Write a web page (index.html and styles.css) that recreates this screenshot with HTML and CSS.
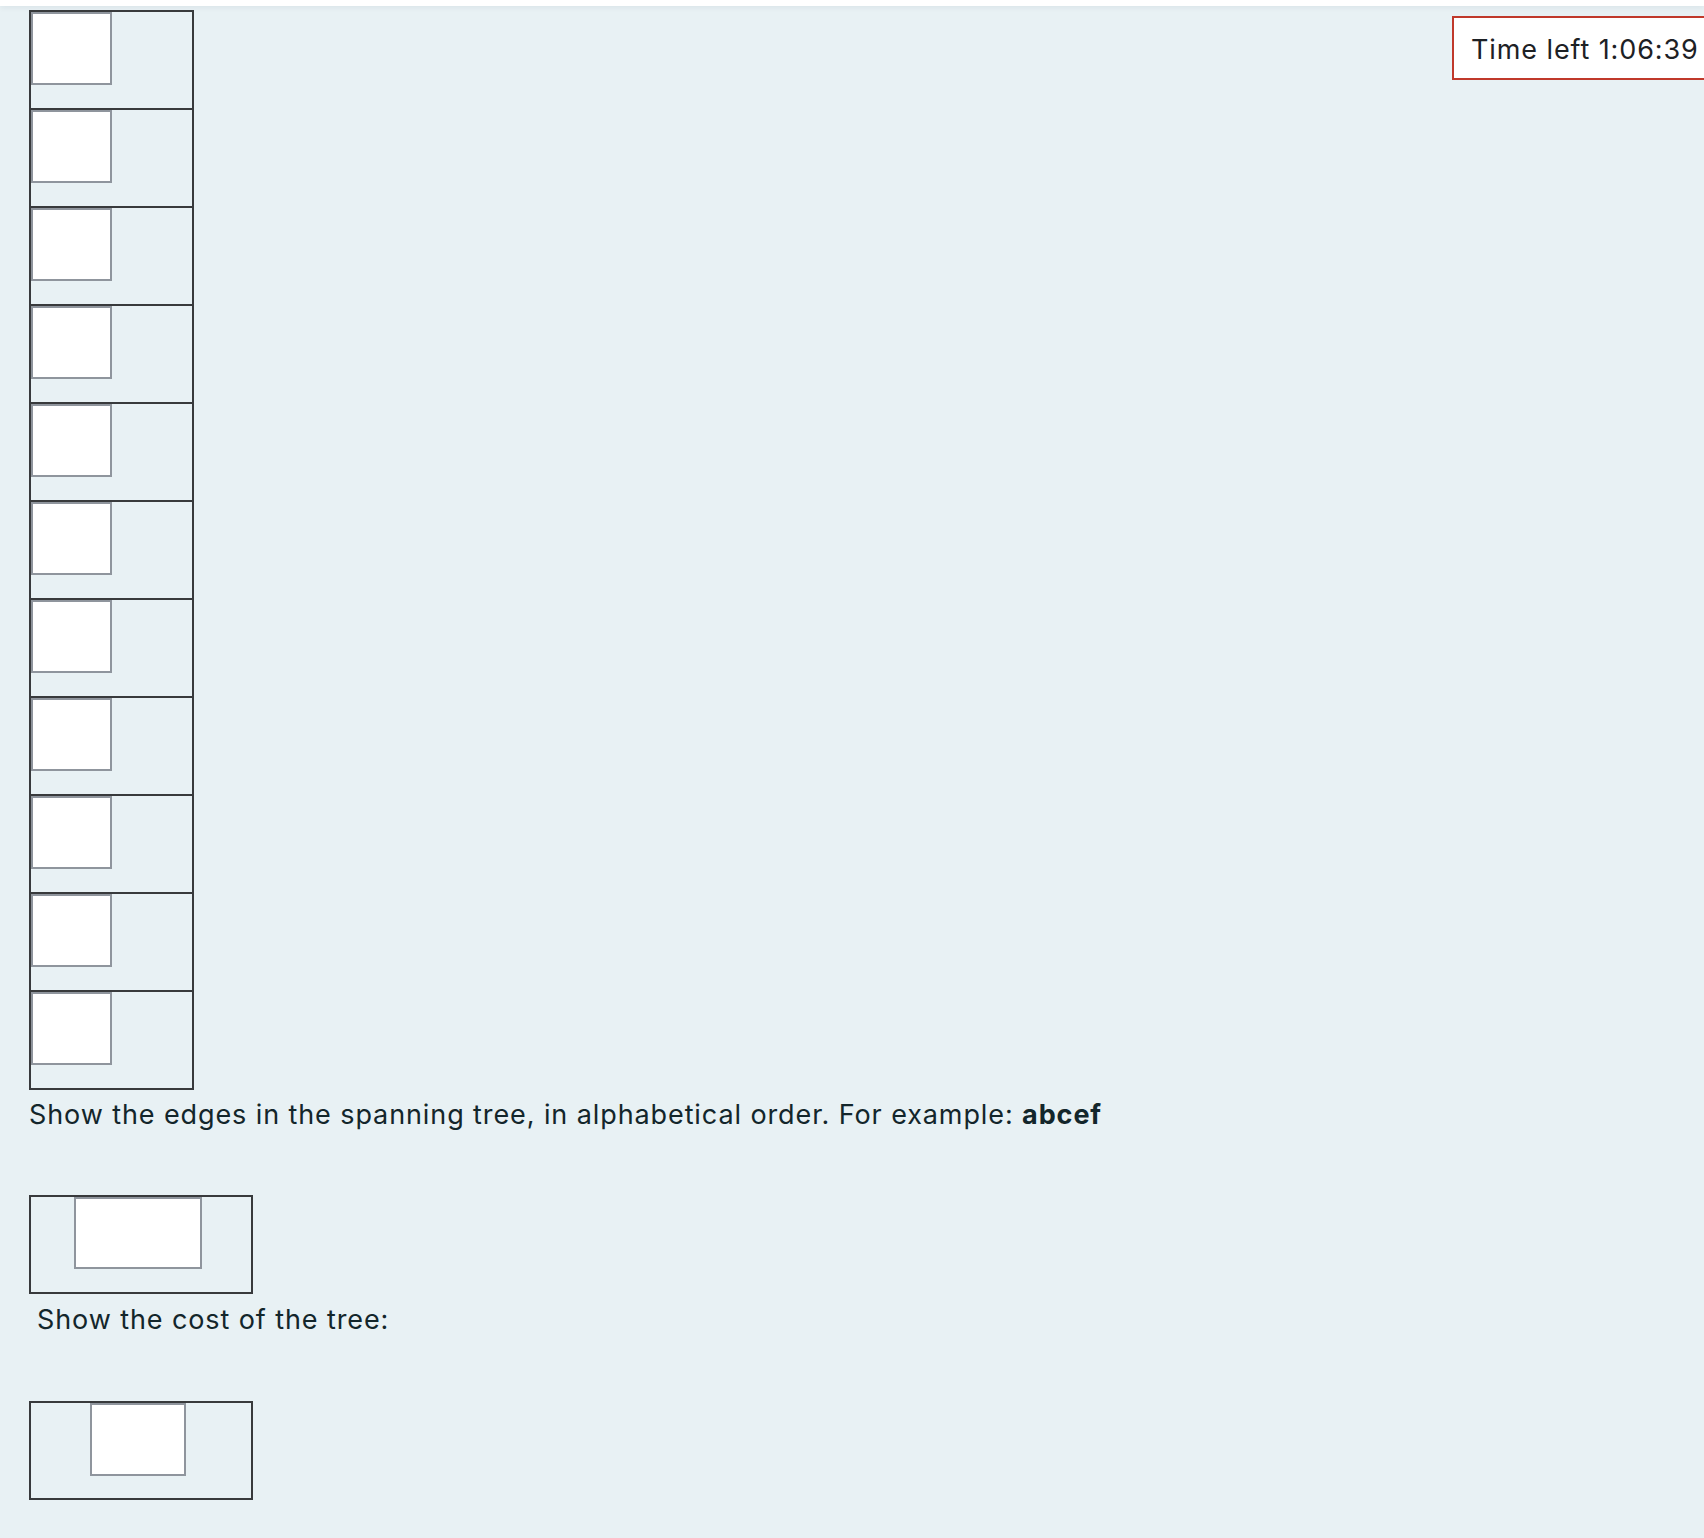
FILE: index.html
```html
<!DOCTYPE html>
<html lang="en">
<head>
<meta charset="utf-8">
<title>Quiz</title>
<link rel="stylesheet" href="styles.css">
</head>
<body>
<div class="topbar"></div>
<div class="timer">Time left 1:06:39</div>
<main class="content">
  <table class="grid">
    <tbody>
      <tr><td><span class="field field-sq"></span></td></tr>
      <tr><td><span class="field field-sq"></span></td></tr>
      <tr><td><span class="field field-sq"></span></td></tr>
      <tr><td><span class="field field-sq"></span></td></tr>
      <tr><td><span class="field field-sq"></span></td></tr>
      <tr><td><span class="field field-sq"></span></td></tr>
      <tr><td><span class="field field-sq"></span></td></tr>
      <tr><td><span class="field field-sq"></span></td></tr>
      <tr><td><span class="field field-sq"></span></td></tr>
      <tr><td><span class="field field-sq"></span></td></tr>
      <tr><td><span class="field field-sq"></span></td></tr>
    </tbody>
  </table>
  <p class="prompt">Show the edges in the spanning tree, in alphabetical order. For example: <strong>abcef</strong></p>
  <div class="answer answer-first"><span class="field field-wide"></span></div>
  <p class="prompt prompt-indent">Show the cost of the tree:</p>
  <div class="answer answer-second"><span class="field field-mid"></span></div>
</main>
</body>
</html>
```
FILE: styles.css
```css
html, body {
  margin: 0;
  padding: 0;
}
body {
  background: #e8f1f4;
  font-family: Inter, "Noto Sans", "Liberation Sans", sans-serif;
  color: #13262b;
  min-height: 1538px;
  position: relative;
  overflow: hidden;
}
.topbar {
  height: 6px;
  background: #ffffff;
  box-shadow: 0 1px 6px rgba(0, 40, 60, 0.08);
}
.timer {
  position: absolute;
  top: 16px;
  left: 1452px;
  width: 300px;
  height: 60px;
  box-sizing: content-box;
  border: 2px solid #c0392b;
  background: #ffffff;
  color: #1d2125;
  font-size: 27px;
  letter-spacing: 0.9px;
  line-height: 64px;
  padding-left: 17px;
  white-space: nowrap;
}
.content {
  padding: 4px 0 0 29px;
}
.grid {
  border-collapse: collapse;
  border-spacing: 0;
}
.grid td {
  border: 2px solid #383a3c;
  width: 163px;
  height: 98px;
  padding: 0;
  vertical-align: top;
  box-sizing: border-box;
}
.field {
  display: block;
  background: #ffffff;
  border: 2px solid #8f959d;
  box-sizing: border-box;
}
.field-sq {
  width: 81px;
  height: 73px;
}
.prompt {
  margin: 0;
  font-size: 27px;
  letter-spacing: 0.9px;
  line-height: 40px;
  padding-top: 5px;
}
.prompt strong {
  font-weight: 700;
}
.prompt-indent {
  padding-left: 8px;
  padding-top: 0;
}
.answer {
  width: 224px;
  height: 99px;
  box-sizing: border-box;
  border: 2px solid #383a3c;
  display: flex;
  justify-content: center;
  align-items: flex-start;
  padding-right: 7px;
}
.answer-first {
  margin: 60px 0 6px;
}
.answer-second {
  margin: 61px 0 0;
}
.field-wide {
  width: 128px;
  height: 72px;
}
.field-mid {
  width: 96px;
  height: 73px;
}
```
